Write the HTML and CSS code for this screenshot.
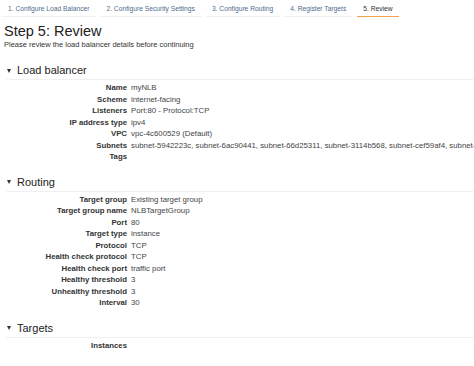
FILE: index.html
```html
<!DOCTYPE html>
<html>
<head>
<meta charset="utf-8">
<link rel="stylesheet" href="styles.css">
</head>
<body>
<nav class="tabs">
  <div class="tab">1. Configure Load Balancer</div>
  <div class="tab">2. Configure Security Settings</div>
  <div class="tab">3. Configure Routing</div>
  <div class="tab">4. Register Targets</div>
  <div class="tab active">5. Review</div>
</nav>
<h1 class="title">Step 5: Review</h1>
<p class="subtitle">Please review the load balancer details before continuing</p>

<section class="section first">
  <h2 class="section-head"><span class="caret"></span>Load balancer</h2>
  <div class="rows">
    <div class="label">Name</div><div class="value">myNLB</div>
    <div class="label">Scheme</div><div class="value">internet-facing</div>
    <div class="label">Listeners</div><div class="value">Port:80 - Protocol:TCP</div>
    <div class="label">IP address type</div><div class="value">ipv4</div>
    <div class="label">VPC</div><div class="value">vpc-4c600529 (Default)</div>
    <div class="label">Subnets</div><div class="value">subnet-5942223c, subnet-6ac90441, subnet-66d25311, subnet-3114b568, subnet-cef59af4, subnet-1a2b3c4d</div>
    <div class="label">Tags</div><div class="value"></div>
  </div>
</section>

<section class="section">
  <h2 class="section-head"><span class="caret"></span>Routing</h2>
  <div class="rows">
    <div class="label">Target group</div><div class="value">Existing target group</div>
    <div class="label">Target group name</div><div class="value">NLBTargetGroup</div>
    <div class="label">Port</div><div class="value">80</div>
    <div class="label">Target type</div><div class="value">instance</div>
    <div class="label">Protocol</div><div class="value">TCP</div>
    <div class="label">Health check protocol</div><div class="value">TCP</div>
    <div class="label">Health check port</div><div class="value">traffic port</div>
    <div class="label">Healthy threshold</div><div class="value">3</div>
    <div class="label">Unhealthy threshold</div><div class="value">3</div>
    <div class="label">Interval</div><div class="value">30</div>
  </div>
</section>

<section class="section">
  <h2 class="section-head"><span class="caret"></span>Targets</h2>
  <div class="rows">
    <div class="label">Instances</div><div class="value"></div>
  </div>
</section>
</body>
</html>
```
FILE: styles.css
```css
html, body {
  margin: 0;
  padding: 0;
  background: #fff;
  overflow: hidden;
}
body {
  font-family: "Liberation Sans", Arial, sans-serif;
  color: #333;
  width: 474px;
  height: 366px;
}
.tabs {
  display: flex;
  gap: 5px;
  padding: 3px 0 0 2px;
  white-space: nowrap;
}
.tab {
  font-size: 6.7px;
  color: #4f6b8c;
  padding: 2px 6px 4px;
  border-bottom: 1px solid #f0f0f0;
}
.tab.active {
  color: #333;
  border-bottom: 1px solid #f0a24a;
}
.title {
  font-size: 14.5px;
  font-weight: normal;
  margin: 6px 0 0 4px;
  line-height: 17px;
  color: #222;
}
.subtitle {
  font-size: 7.5px;
  margin: 0 0 0 4px;
  line-height: 10px;
  color: #333;
}
.section {
  margin-top: 13px;
}
.section.first {
  margin-top: 14px;
}
.section-head {
  display: flex;
  align-items: center;
  font-size: 11px;
  font-weight: normal;
  margin: 0 0 0 6px;
  padding-bottom: 2px;
  border-bottom: 1px solid #f0f0f0;
  line-height: 13px;
  color: #222;
}
.caret {
  width: 0;
  height: 0;
  border-left: 2.5px solid transparent;
  border-right: 2.5px solid transparent;
  border-top: 4px solid #333;
  margin-right: 6px;
  margin-left: 1px;
}
.rows {
  display: grid;
  grid-template-columns: 127px 1fr;
  column-gap: 4px;
  row-gap: 0;
  padding-top: 2px;
  font-size: 7.8px;
  line-height: 11.5px;
  white-space: nowrap;
}
.label {
  text-align: right;
  font-weight: bold;
  font-size: 7.8px;
  color: #333;
}
.value {
  color: #444;
  overflow: hidden;
}
```
